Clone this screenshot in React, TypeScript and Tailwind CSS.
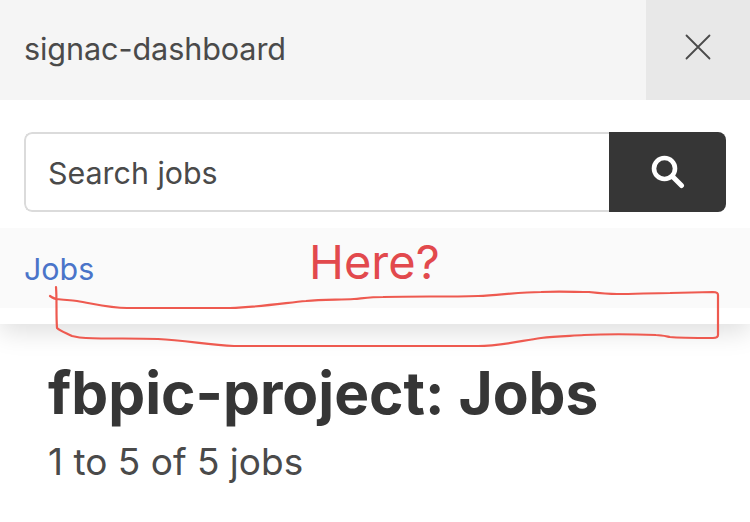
const sans = "font-['Inter','Noto_Sans',sans-serif]";

export default function App() {
  return (
    <div className={`relative h-[522px] w-[750px] overflow-hidden bg-white text-[#363636] ${sans}`}>
      <div className="relative z-10 bg-white shadow-[0_8px_24px_rgba(0,0,0,0.13)]">
        <div className="flex h-[100px] items-center justify-between bg-[#f5f5f5]">
          <span className="pb-[1px] pl-[24px] text-[30.6px] leading-none tracking-[-0.1px] text-[#4a4a4a]">signac-dashboard</span>
          <button className="flex h-full w-[104px] items-center justify-center bg-[#e8e8e8] pb-[6px]">
            <svg width="26" height="26" viewBox="0 0 26 26" fill="none" stroke="#4a4a4a" strokeWidth="1.8" strokeLinecap="round">
              <path d="M1.5 1.5 24.5 24.5M24.5 1.5 1.5 24.5" />
            </svg>
          </button>
        </div>

        <div className="px-6 pb-4 pt-8">
          <div className="flex h-20 overflow-hidden rounded-lg">
            <div className="flex flex-1 items-center rounded-l-lg border-2 border-r-0 border-[#dbdbdb] pl-[22px] pt-[4px] text-[30.4px] text-[#4a4a4a]">
              Search jobs
            </div>
            <button className="flex w-[117px] items-center justify-center bg-[#363636]">
              <svg width="34" height="34" viewBox="0 0 34 34" fill="none" stroke="#fff" strokeLinecap="round">
                <circle cx="13.5" cy="13.5" r="10.5" strokeWidth="4.6" />
                <path d="M21.5 21.5 30.5 30.5" strokeWidth="5" />
              </svg>
            </button>
          </div>
        </div>

        <div className="flex h-20 items-center bg-[#fafafa] px-[24px] pt-[4px]">
          <a className="text-[30.4px] text-[#4a74c9]">Jobs</a>
        </div>
        <div className="h-4 bg-white" />
      </div>

      <div className="pl-12 pt-[34px]">
        <h1 className="text-[58.6px] font-bold leading-[70px] text-[#363636]">fbpic-project: Jobs</h1>
        <p className="mt-[8px] text-[37px] leading-[52px] text-[#4a4a4a]">1 to 5 of 5 jobs</p>
      </div>

      {/* hand-drawn note on top of the screenshot */}
      <span className="absolute left-[309px] top-[234px] z-20 text-[47px] leading-[56px] text-[#e2494d]">Here?</span>
      <svg className="absolute left-0 top-0 z-20" width="750" height="522" fill="none" stroke="#ee5a50" strokeWidth="2.2" strokeLinecap="round" strokeLinejoin="round">
        <path d="M50 296C53 298 55 299 57 299C63 300 70 300 77 301C95 304 110 308 127 308L230 308C260 307 285 303 306 301C322 299 340 300 354 299C365 298 372 297 383 297C415 296 445 297 478 296C500 295 520 292 541 292C560 291 575 292 589 292C598 293 607 294 617 294C635 294 652 293 670 293L713 292C717 292 718 293 718 295L718 335C718 337 716 338 713 338C697 338 680 338 670 337C665 336 661 335 656 335C630 334 606 334 584 335C570 336 556 336 541 338C520 341 500 346 478 346L234 346C208 345 185 340 158 339C135 338 110 339 86 338C80 338 76 337 72 336C66 333 60 331 57 328C56 314 57 300 56 287" />
      </svg>
    </div>
  );
}
